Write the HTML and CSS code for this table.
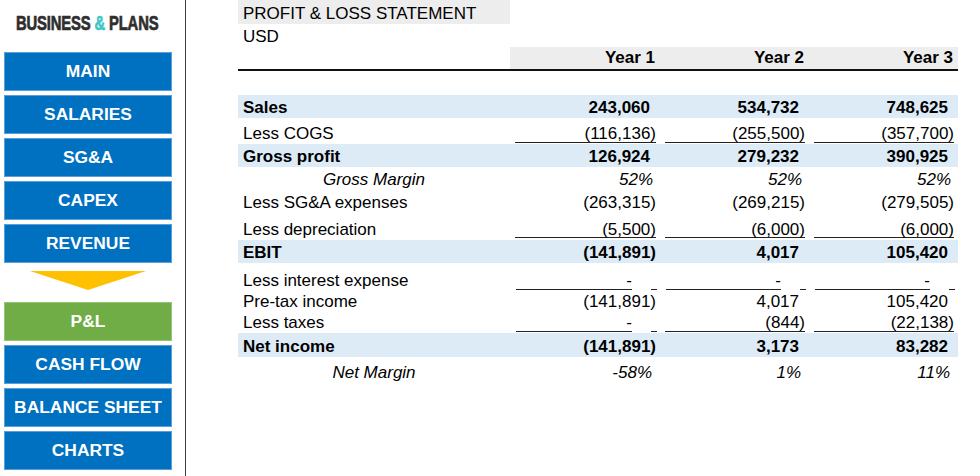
FILE: index.html
```html
<!DOCTYPE html>
<html>
<head>
<meta charset="utf-8">
<link rel="stylesheet" href="styles.css">
</head>
<body>
<div class="page">
  <aside class="sidebar">
    <div class="logo"><span class="logo-text">BUSINESS <span class="amp">&amp;</span> PLANS</span></div>
    <nav class="nav">
      <div class="btn">MAIN</div>
      <div class="btn">SALARIES</div>
      <div class="btn">SG&amp;A</div>
      <div class="btn">CAPEX</div>
      <div class="btn">REVENUE</div>
      <div class="arrow"></div>
      <div class="btn active">P&amp;L</div>
      <div class="btn">CASH FLOW</div>
      <div class="btn">BALANCE SHEET</div>
      <div class="btn">CHARTS</div>
    </nav>
  </aside>
  <main class="main">
    <div class="sheet">
      <div class="row h24"><div class="c lab title">PROFIT &amp; LOSS STATEMENT</div></div>
      <div class="row h23"><div class="c lab">USD</div></div>
      <div class="row head"><div class="c"></div><div class="c v hd">Year 1</div><div class="c v hd">Year 2</div><div class="c v hd">Year 3</div></div>
      <div class="row h24"></div>
      <div class="row h23 hl b"><div class="c lab">Sales</div><div class="c v pos">243,060</div><div class="c v pos">534,732</div><div class="c v pos">748,625</div></div>
      <div class="row h26"><div class="c lab">Less COGS</div><div class="c v neg u">(116,136)</div><div class="c v neg u">(255,500)</div><div class="c v neg u">(357,700)</div></div>
      <div class="row h23 hl b"><div class="c lab">Gross profit</div><div class="c v pos">126,924</div><div class="c v pos">279,232</div><div class="c v pos">390,925</div></div>
      <div class="row h23 it"><div class="c lab ctr">Gross Margin</div><div class="c v pct">52%</div><div class="c v pct">52%</div><div class="c v pct">52%</div></div>
      <div class="row h23"><div class="c lab">Less SG&amp;A expenses</div><div class="c v neg">(263,315)</div><div class="c v neg">(269,215)</div><div class="c v neg">(279,505)</div></div>
      <div class="row h27"><div class="c lab">Less depreciation</div><div class="c v neg u u2">(5,500)</div><div class="c v neg u u2">(6,000)</div><div class="c v neg u u2">(6,000)</div></div>
      <div class="row h23 hl b"><div class="c lab">EBIT</div><div class="c v neg">(141,891)</div><div class="c v pos">4,017</div><div class="c v pos">105,420</div></div>
      <div class="row h28"><div class="c lab">Less interest expense</div><div class="c v z">-</div><div class="c v z">-</div><div class="c v z">-</div></div>
      <div class="row h21"><div class="c lab">Pre-tax income</div><div class="c v neg">(141,891)</div><div class="c v pos">4,017</div><div class="c v pos">105,420</div></div>
      <div class="row h21"><div class="c lab">Less taxes</div><div class="c v z">-</div><div class="c v neg u">(844)</div><div class="c v neg u">(22,138)</div></div>
      <div class="row h24 hl b"><div class="c lab">Net income</div><div class="c v neg">(141,891)</div><div class="c v pos">3,173</div><div class="c v pos">83,282</div></div>
      <div class="row h26 it"><div class="c lab ctr">Net Margin</div><div class="c v pct2">-58%</div><div class="c v pct2">1%</div><div class="c v pct2">11%</div></div>
    </div>
  </main>
</div>
</body>
</html>
```
FILE: styles.css
```css
html, body {
  margin: 0;
  padding: 0;
  background: #fff;
}
body {
  font-family: "Liberation Sans", Arial, sans-serif;
  color: #000;
}
.page {
  display: flex;
  height: 476px;
  overflow: hidden;
}
.sidebar {
  width: 185px;
  flex: none;
  border-right: 1px solid #3c3c3c;
  height: 476px;
}
.logo {
  width: 174px;
  height: 46px;
  display: flex;
  align-items: center;
  justify-content: center;
}
.logo-text {
  display: inline-block;
  white-space: nowrap;
  font-weight: bold;
  font-size: 20px;
  color: #2e2e2e;
  -webkit-text-stroke: 0.7px #2e2e2e;
  transform: scaleX(0.74);
  letter-spacing: -0.2px;
}
.logo-text .amp {
  color: #3fc6c6;
  -webkit-text-stroke: 0.7px #3fc6c6;
}
.nav {
  margin-top: 6px;
  padding-left: 4px;
  width: 168px;
  display: flex;
  flex-direction: column;
  align-items: center;
}
.btn {
  box-sizing: border-box;
  width: 168px;
  height: 39px;
  margin-bottom: 4px;
  background: #0070c0;
  border: 1px solid #5c9fd8;
  color: #fff;
  font-weight: bold;
  font-size: 17.4px;
  display: flex;
  align-items: center;
  justify-content: center;
}
.btn.active {
  background: #70ad47;
  border-color: #93c572;
}
.arrow {
  width: 0;
  height: 0;
  margin-top: 4px;
  margin-bottom: 12px;
  border-left: 58px solid transparent;
  border-right: 58px solid transparent;
  border-top: 19px solid #ffc000;
}
.main {
  flex: 1;
  padding-left: 52px;
}
.sheet {
  width: 720px;
  font-size: 17px;
}
.row {
  display: grid;
  grid-template-columns: 272px 150px 149px 149px;
}
.h21 { height: 21px; }
.h23 { height: 23px; }
.h24 { height: 24px; }
.h26 { height: 26px; }
.h27 { height: 27px; }
.h28 { height: 28px; }
.head {
  height: 22px;
  border-bottom: 2px solid #111;
  font-weight: bold;
}
.hl { background: #ddebf7; }
.b { font-weight: bold; }
.it { font-style: italic; }
.c {
  display: flex;
  align-items: flex-end;
  line-height: 20px;
  white-space: nowrap;
}
.lab { padding-left: 5px; grid-column: 1; }
.title { background: #ededed; }
.ctr { justify-content: center; padding-left: 0; }
.v { justify-content: flex-end; }
.hd { background: #ededed; padding-right: 5px; padding-bottom: 1px; }
.neg { padding-right: 4px; }
.pos { padding-right: 10px; }
.pct { padding-right: 7px; }
.pct2 { padding-right: 8px; }
.u {
  background-image: linear-gradient(#222, #222);
  background-repeat: no-repeat;
  background-size: calc(100% - 9px) 1px;
  background-position: 5px calc(100% - 1px);
}
.u2 { background-position: 5px calc(100% - 2px); }
.z {
  padding-right: 28px;
  background-image: linear-gradient(#222, #222), linear-gradient(#222, #222);
  background-repeat: no-repeat;
  background-size: calc(100% - 34px) 1px, 6px 1px;
  background-position: 6px calc(100% - 1px), calc(100% - 3px) calc(100% - 1px);
}
```
